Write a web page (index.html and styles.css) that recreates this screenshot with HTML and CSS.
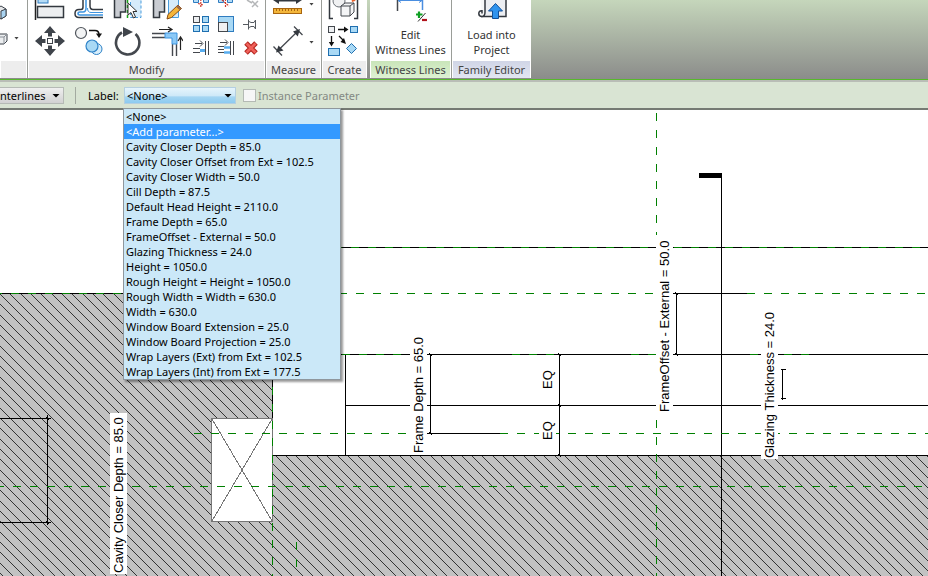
FILE: index.html
```html
<!DOCTYPE html>
<html lang="en">
<head>
    <meta charset="utf-8">
    <title>Family Editor</title>
    <link rel="stylesheet" href="styles.css">
</head>
<body>
    <div class="ribbon">
        <div class="panel panel-geometry">
            <div class="panel-body">
                <div class="tool-grid">
                    <button class="tool" aria-label="Cut"><svg width="8" height="32" viewBox="0 -12 8 32"><path d="M-4 9L1 6L6 9V16L1 19L-4 16Z" fill="#e4e6e8" stroke="#3c424a"/><path d="M1 11L6 9V16L1 19Z" fill="#a9d3f0" stroke="#3c424a"/></svg></button>
                    <span></span>
                    <button class="tool" aria-label="Join"><svg width="8" height="32" viewBox="0 26 8 32"><path d="M-3 36L0 34H7V41L4 44H-3Z" fill="#eceef0" stroke="#3c424a"/><path d="M-3 37H4L7 34M4 37V44" fill="none" stroke="#8a9098"/></svg></button>
                    <button class="caret" aria-label="Join options"></button>
                </div>
            </div>
            <div class="panel-title"></div>
        </div>

        <div class="panel panel-modify">
            <div class="panel-body">
                <div class="big-grid">
                    <button class="tool" aria-label="Align"><svg width="32" height="32" viewBox="34 -12 32 32"><path d="M35.500 -12V20" stroke="#222" stroke-width="1.500"/><rect x="38" y="-8" width="10" height="11" fill="#b5dcf7" stroke="#2f7cc0"/><rect x="37.500" y="6.500" width="26" height="11" fill="#eceef0" stroke="#33383f" stroke-width="1.500"/></svg></button>
                    <button class="tool" aria-label="Offset"><svg width="32" height="32" viewBox="73 -12 32 32"><path d="M103 17.500H79Q75 17.500 75 13.500Q75 9.500 79 9.500H81Q83 9.500 83 7V-8" fill="none" stroke="#33383f" stroke-width="1.500"/><path d="M103 15H80Q78 15 78 13.500Q78 12 80 12H83Q86 12 86 8V-8" fill="none" stroke="#3d94e0" stroke-width="1.500"/><path d="M103 9.500H93Q90 9.500 90 6V-8" fill="none" stroke="#33383f" stroke-width="1.500"/><path d="M103 12.500H91Q87.500 12.500 87.500 8" fill="none" stroke="#3d94e0"/></svg></button>
                    <button class="tool" aria-label="Split"><svg width="32" height="32" viewBox="112 -12 32 32"><path d="M114.500 -8H125.500V12H120.500V17.500H114.500Z" fill="#c9ccd2" stroke="#33383f" stroke-width="1.500"/><path d="M130.500 -8V17.500H141V-8" fill="#d6ecfb" stroke="#4a9cdc" stroke-dasharray="3 2"/><path d="M127.500 -10V20" stroke="#19a319" stroke-width="1.500" stroke-dasharray="3 2"/><path d="M128 3V15L131 12.500L133.500 18L135.500 17L133 11.500H137Z" fill="#fff" stroke="#333"/></svg></button>
                    <button class="tool" aria-label="Split with gap"><svg width="32" height="32" viewBox="151 -12 32 32"><path d="M153.500 -8H164.500V12H159.500V17.500H153.500Z" fill="#c9ccd2" stroke="#33383f" stroke-width="1.500"/><path d="M168.500 -8V17.500H178.500V-8" fill="#d6ecfb" stroke="#4a9cdc"/><path d="M178 5L181.500 8.500L171.500 17.500L167 19L168 14.500Z" fill="#f5b53a" stroke="#8a4d13"/><path d="M178 5L181.500 8.500L179.500 10L176 6.800Z" fill="#9a6a4a"/></svg></button>
                    <button class="tool" aria-label="Move"><svg width="32" height="32" viewBox="34 26 32 32"><g fill="#3f444b"><path d="M50 26L56 33H52V36.500H48V33H44Z"/><path d="M50 56L56 49H52V45.500H48V49H44Z"/><path d="M35 41L42 35V39H45.500V43H42V47Z"/><path d="M65 41L58 35V39H54.500V43H58V47Z"/></g><rect x="47.500" y="38.500" width="5" height="5" fill="#fff" stroke="#3f444b"/></svg></button>
                    <button class="tool" aria-label="Copy"><svg width="32" height="32" viewBox="73 26 32 32"><circle cx="81" cy="33" r="5.500" fill="#f2f3f4" stroke="#50555c" stroke-width="1.200"/><path d="M89 30.500H95Q99 30.500 99 35" fill="none" stroke="#111" stroke-width="1.500"/><path d="M96 33.500H102L99 38Z" fill="#111"/><circle cx="96.500" cy="49" r="5.500" fill="#d8eefb" stroke="#2f83c8"/><circle cx="92" cy="46" r="6" fill="#a9d9f5" stroke="#2f83c8" stroke-width="1.200"/></svg></button>
                    <button class="tool" aria-label="Rotate"><svg width="32" height="32" viewBox="112 26 32 32"><path d="M135.500 34A11.700 11.700 0 1 1 122 32.500" fill="none" stroke="#44484e" stroke-width="2.600"/><path d="M123 27L133 32L123 37Z" fill="#3f444b"/></svg></button>
                    <button class="tool" aria-label="Trim to corner"><svg width="32" height="32" viewBox="151 26 32 32"><path d="M152 33.500H165M152 37.500H165M172.500 44V56M176.500 44V56" stroke="#44484e" stroke-width="1.400"/><path d="M165 33H177V44H172V38H165Z" fill="#8cc9f6" stroke="#3d94e0"/><path d="M159 29.500H171M168 27L172 29.500L168 32M180.500 50V38M178 41L180.500 37L183 41" fill="none" stroke="#222" stroke-width="1.200"/></svg></button>
                </div>
                <div class="small-grid">
                    <button class="tool" aria-label="Split element"><svg width="20" height="20" viewBox="191 -10 20 20"><path d="M193.500 -2V2.500H198.500V-2M203.500 -2V2.500H208.500V-2" fill="#b5dcf7" stroke="#2f7cc0"/><path d="M200.800 -4V7M198 3.500L203.500 5" stroke="#cf3b2c" stroke-width="1.200" stroke-dasharray="2 1"/></svg></button>
                    <button class="tool" aria-label="Mirror"><svg width="20" height="20" viewBox="216 -10 20 20"><path d="M218.500 -2V2.500H223.500V-2M227.500 -2V2.500H232.500V-2" fill="#b5dcf7" stroke="#2f7cc0"/><path d="M225.500 -4V7M222 0L229 6" stroke="#cf3b2c" stroke-width="1.200" stroke-dasharray="2 1"/></svg></button>
                    <button class="tool" aria-label="Unpin"><svg width="20" height="20" viewBox="241 -10 20 20"><path d="M247 0L252 3M252 1L258 7M258 1L252 7" fill="none" stroke="#b4b6b8" stroke-width="1.500"/></svg></button>
                    <button class="tool" aria-label="Array"><svg width="20" height="20" viewBox="191 14 20 20"><rect x="193.500" y="16.500" width="6" height="6" fill="#eceef0" stroke="#44484e"/><g fill="#a9d9f5" stroke="#1f6fb0"><rect x="202.500" y="16.500" width="6" height="6"/><rect x="193.500" y="25.500" width="6" height="6"/><rect x="202.500" y="25.500" width="6" height="6"/></g></svg></button>
                    <button class="tool" aria-label="Scale"><svg width="20" height="20" viewBox="216 14 20 20"><rect x="218.500" y="16.500" width="15" height="15" fill="#a9d9f5" stroke="#2f7cc0"/><rect x="218.500" y="22.500" width="9" height="9" fill="#f0f1f2" stroke="#44484e"/></svg></button>
                    <button class="tool" aria-label="Pin"><svg width="20" height="20" viewBox="241 14 20 20"><path d="M243 24.500H248M248.500 19.500V29.500M249 21.500L251 22.500H254L255.500 20V29L254 26.500H251L249 27.500" fill="none" stroke="#555a60"/></svg></button>
                    <button class="tool" aria-label="Extend single"><svg width="20" height="20" viewBox="191 38 20 20"><path d="M195 43.500H202M200 40.500L203 43.500L200 46.500M193 48.500H200M193 52.500H200M205.500 41V55M208.500 41V55" fill="none" stroke="#44484e"/><path d="M200 50.500H205" stroke="#59aef0" stroke-width="3"/></svg></button>
                    <button class="tool" aria-label="Extend multiple"><svg width="20" height="20" viewBox="216 38 20 20"><path d="M220 42.500H227M225 39.500L228 42.500L225 45.500M218 46.500H224M218 49.500H224M218 52.500H224M230.500 41V55M233.500 41V55" fill="none" stroke="#44484e"/><path d="M224 47.500H230M224 52.500H230" stroke="#59aef0" stroke-width="2.500"/></svg></button>
                    <button class="tool" aria-label="Delete"><svg width="20" height="20" viewBox="241 38 20 20"><path d="M246 43L256 53M256 43L246 53" stroke="#b3261e" stroke-width="5"/><path d="M246.500 43.500L255.500 52.500M255.500 43.500L246.500 52.500" stroke="#f0605a" stroke-width="2.800"/></svg></button>
                </div>
            </div>
            <div class="panel-title">Modify</div>
        </div>

        <div class="panel panel-measure">
            <div class="panel-body">
                <div class="tool-grid">
                    <button class="tool" aria-label="Measure"><svg width="32" height="32" viewBox="271 -12 32 32"><path d="M273 0L279 -4V-1H296V-4L302 0L296 4V1.500H279V4Z" fill="#33383f"/><rect x="273.500" y="8.500" width="28" height="5" fill="#f3b63b" stroke="#a8650f"/><path d="M276.500 9V11M279.500 9V11M282.500 9V11M285.500 9V11M288.500 9V11M291.500 9V11M294.500 9V11M297.500 9V11" stroke="#a8650f"/></svg></button>
                    <button class="caret" aria-label="Measure options"></button>
                    <button class="tool" aria-label="Aligned dimension"><svg width="32" height="32" viewBox="271 26 32 32"><path d="M277.500 51L298.500 30.500M273.500 46.500L282 55.500M294 26.500L302.500 35" stroke="#44484e" stroke-width="1.300"/><path d="M276 52.500L278.500 45.500L283.500 50.500ZM300 29L293 31.500L297.800 36.500Z" fill="#33383f"/></svg></button>
                    <button class="caret" aria-label="Dimension options"></button>
                </div>
            </div>
            <div class="panel-title">Measure</div>
        </div>

        <div class="panel panel-create">
            <div class="panel-body">
                <div class="create-grid">
                    <button class="tool" aria-label="Create group"><svg width="32" height="32" viewBox="328 -12 32 32"><path d="M333 -8H329.500V18.500H333M354 -8H357.500V18.500H354" fill="none" stroke="#33383f" stroke-width="1.500"/><circle cx="339" cy="1" r="6" fill="#f0f1f2" stroke="#6a6f76"/><path d="M341 6L345 3H354V12L350 16H341Z" fill="#f4f5f6" stroke="#44484e"/><path d="M341 6H350L354 3M350 6V16" fill="none" stroke="#44484e"/><path d="M351 -4L353 -1L357 -2L355 1L352 2Z" fill="#e5602a"/></svg></button>
                    <button class="tool" aria-label="Create similar"><svg width="32" height="32" viewBox="328 26 32 32"><rect x="328.500" y="26.500" width="6" height="6" fill="#eceef0" stroke="#44484e"/><rect x="350.500" y="26.500" width="7" height="6" fill="#a9d9f5" stroke="#1f6fb0"/><rect x="328.500" y="48.500" width="11" height="7" fill="#a9d9f5" stroke="#1f6fb0"/><path d="M351.500 43.500L356.500 48.500L351.500 53.500L346.500 48.500Z" fill="#a9d9f5" stroke="#1f6fb0"/><path d="M338 29.500H345M331.500 36V43M339 36L344 41" stroke="#111" stroke-width="1.300"/><path d="M344 26.500L348.500 29.500L344 32.500ZM328.800 42H334.200L331.500 46.500ZM346 44L340.500 42L344 38Z" fill="#111"/></svg></button>
                </div>
            </div>
            <div class="panel-title">Create</div>
        </div>

        <div class="panel panel-witness">
            <div class="panel-body">
                <button class="big-button">
                    <svg width="32" height="32" viewBox="394 -8 32 32"><path d="M396.500 -8V11M421.500 -8V0" stroke="#44484e" stroke-width="1.500"/><path d="M397 .5H421" stroke="#4a8ee0"/><path d="M421.500 0V10" stroke="#4a8ee0" stroke-width="1.500"/><path d="M400 -1.500L397 .5L400 2.500M418 -1.500L421 .5L418 2.500" fill="none" stroke="#4a8ee0"/><path d="M418 11.500V18M415 14.500H421.500" stroke="#0e9f22" stroke-width="2.200"/><path d="M417 21.500L424.500 13" stroke="#333"/><path d="M421 20H426" stroke="#b1121b" stroke-width="2.200"/></svg>
                    <span>Edit</span>
                    <span>Witness Lines</span>
                </button>
            </div>
            <div class="panel-title">Witness Lines</div>
        </div>

        <div class="panel panel-family">
            <div class="panel-body">
                <button class="big-button">
                    <svg width="32" height="32" viewBox="476 -8 32 32"><path d="M483.500 -8H506V16.500H481" fill="#eceef2" stroke="#33383f" stroke-width="1.500"/><path d="M479.500 -8H485V12Q485 16.500 482 16.500Q478.800 16.500 478.800 13.500Q478.800 10.500 482 10.800V13.500" fill="#f6f7f8" stroke="#33383f" stroke-width="1.500"/><path d="M495.500 3.500L502.500 11H498.500V18.500H492.500V11H488.500Z" fill="#2f93ee" stroke="#114f98"/></svg>
                    <span>Load into</span>
                    <span>Project</span>
                </button>
            </div>
            <div class="panel-title">Family Editor</div>
        </div>
    </div>

    <div class="options-bar">
        <div class="combo combo-prefer">
            <select aria-label="Placement reference">
                <option>nterlines</option>
            </select>
        </div>
        <div class="divider"></div>
        <label class="field-label" for="label-select">Label:</label>
        <div class="combo combo-label">
            <select id="label-select">
                <option>&lt;None&gt;</option>
            </select>
            <ul class="menu">
                <li>&lt;None&gt;</li>
                <li class="active">&lt;Add parameter...&gt;</li>
                <li>Cavity Closer Depth = 85.0</li>
                <li>Cavity Closer Offset from Ext = 102.5</li>
                <li>Cavity Closer Width = 50.0</li>
                <li>Cill Depth = 87.5</li>
                <li>Default Head Height = 2110.0</li>
                <li>Frame Depth = 65.0</li>
                <li>FrameOffset - External = 50.0</li>
                <li>Glazing Thickness = 24.0</li>
                <li>Height = 1050.0</li>
                <li>Rough Height = Height = 1050.0</li>
                <li>Rough Width = Width = 630.0</li>
                <li>Width = 630.0</li>
                <li>Window Board Extension = 25.0</li>
                <li>Window Board Projection = 25.0</li>
                <li>Wrap Layers (Ext) from Ext = 102.5</li>
                <li>Wrap Layers (Int) from Ext = 177.5</li>
            </ul>
        </div>
        <label class="check">
            <input type="checkbox" disabled>
            Instance Parameter
        </label>
    </div>

    <svg class="drawing" viewBox="0 110 928 466">
        <defs>
            <pattern id="hatch" x="0" y="294" width="31" height="31" patternUnits="userSpaceOnUse">
                <path class="hatch-line" d="M0 0L31 31M10 0L31 21M0 21L10 31M21 0L31 10M0 10L21 31"/>
            </pattern>
        </defs>

        <!-- walls -->
        <path class="wall" d="M0 294H272V456H928V576H0Z"/>
        <path fill="url(#hatch)" d="M0 294H272V456H928V576H0Z"/>

        <!-- cavity closer -->
        <rect class="closer" x="211.500" y="418.500" width="61" height="103"/>
        <path class="closer-cross" d="M212 419L272 521M272 419L212 521"/>

        <!-- model lines -->
        <g class="line">
            <path d="M0 293.500H272M341 247.500H928M341 354.500H928M345 405.500H928M273 455.500H928"/>
            <path d="M272.500 294V418M345.500 354V456M721.500 173V576"/>
            <path d="M0 418.500H51M0 522.500H51M47.500 415V525"/>
            <path d="M430.500 354V434M427 433.500H502M559.500 354V456"/>
            <path d="M673 293.500H747M676.500 293V355M782.500 369V400M781 369.500H786M781 398.500H786"/>
        </g>
        <path class="tick" d="M46 417L49 420M46 521L49 524M429 353L432 356M429 432L432 435M558 353L561 356M558 404L561 407M558 454L561 457M675 292L678 295M675 353L678 356"/>
        <rect x="699" y="173" width="23" height="5"/>

        <!-- reference planes -->
        <g class="plane">
            <path d="M-4 486.500H928M-6 293.500H124M339 293.500H660M747 293.500H928"/>
            <path d="M194 433.500H427M500 433.500H928"/>
            <path d="M334 247.500H928M342 354.500H402M512 354.500H555M631 354.500H656M750 354.500H758M784 354.500H812"/>
            <path d="M272.500 370V576M296.500 542V576M656.500 113V235M656.500 420V576"/>
        </g>

        <!-- dimension labels -->
        <g class="label-bg">
            <rect x="110" y="413" width="17" height="161"/>
            <rect x="410" y="335" width="17" height="118"/>
            <rect x="539" y="369" width="17" height="20"/>
            <rect x="539" y="420" width="17" height="20"/>
            <rect x="656" y="235" width="17" height="178"/>
            <rect x="761" y="308" width="17" height="151"/>
        </g>
        <g class="dim">
            <text transform="translate(123 573) rotate(-90)">Cavity Closer Depth = 85.0</text>
            <text transform="translate(423 453) rotate(-90)">Frame Depth = 65.0</text>
            <text transform="translate(552 389) rotate(-90)">EQ</text>
            <text transform="translate(552 440) rotate(-90)">EQ</text>
            <text transform="translate(669 412) rotate(-90)">FrameOffset - External = 50.0</text>
            <text transform="translate(774 458) rotate(-90)">Glazing Thickness = 24.0</text>
        </g>
    </svg>
</body>
</html>
```

FILE: styles.css
```css
* {
    box-sizing: border-box;
}

body {
    margin: 0;
    font-family: "Noto Sans", "Open Sans", sans-serif;
    font-size: 11px;
    line-height: 15px;
    color: #000;
    background: #fff;
    overflow: hidden;
}

button {
    padding: 0;
    border: none;
    background: none;
    font: inherit;
    color: inherit;
}

svg {
    display: block;
}

/* Ribbon */
.ribbon {
    display: flex;
    height: 80px;
    padding-bottom: 1px;
    background: linear-gradient(#c5d6bb, #8b8c8a);
    border-bottom: 1px solid #58b82c;
    overflow: hidden;
}

.panel {
    display: flex;
    flex-direction: column;
    flex: none;
    border-right: 1px solid #9a9d98;
    background: #fff;
}

.panel-body {
    display: flex;
    align-items: flex-end;
    height: 61px;
    padding-bottom: 3px;
    overflow: hidden;
}

.panel-title {
    flex: 1;
    margin: 0 1px;
    background: #ededed;
    color: #444;
    line-height: 17px;
    text-align: center;
}

.panel-geometry { width: 28px; }
.panel-modify { width: 238px; }
.panel-measure { width: 56px; }
.panel-create { width: 45px; margin-right: 3px; border-right: none; }
.panel-witness { width: 82px; }
.panel-family { width: 79px; border-right: none; }

.panel-modify .panel-body {
    gap: 8px;
    padding-left: 6px;
}

.panel-measure .panel-body {
    padding-left: 5px;
}

.panel-create .panel-body {
    padding-left: 6px;
}

.panel-witness .panel-title {
    background: linear-gradient(#c9e5b9, #def2d3);
}

.panel-family .panel-title {
    background: linear-gradient(#d0d5e6, #e2e6f2);
}

.big-grid {
    display: grid;
    grid-template-columns: repeat(4, 32px);
    gap: 6px 7px;
}

.small-grid {
    display: grid;
    grid-template-columns: repeat(3, 20px);
    gap: 4px 5px;
}

.tool-grid {
    display: grid;
    grid-template-columns: auto auto;
    gap: 6px;
    align-items: center;
}

.create-grid {
    display: grid;
    gap: 6px;
}

.caret {
    width: 5px;
    height: 3px;
    background: #444;
    clip-path: polygon(0 0, 100% 0, 50% 100%);
}

.panel-geometry .caret {
    margin-bottom: 8px;
}

.big-button {
    display: flex;
    flex-direction: column;
    align-items: center;
    width: 100%;
    padding-bottom: 1px;
    color: #333;
}

.big-button svg {
    margin-bottom: 3px;
}

/* Options bar */
.options-bar {
    display: flex;
    align-items: center;
    height: 30px;
    background: #d9e4d3;
    border-top: 2px solid #b9bdb6;
    border-bottom: 2px solid #757a73;
}

.combo {
    position: relative;
}

.combo select {
    display: block;
    width: 100%;
    height: 17px;
    padding: 0 2px;
    border: 1px solid #b5bab5;
    border-radius: 0;
    background: linear-gradient(#efefef, #d2d2d2);
    color: #000;
    font: inherit;
    appearance: none;
}

.combo::after {
    content: "";
    position: absolute;
    top: 7px;
    right: 4px;
    width: 8px;
    height: 4px;
    background: #000;
    clip-path: polygon(0 0, 100% 0, 50% 100%);
}

.combo-prefer {
    width: 64px;
}

.combo-prefer select {
    padding-left: 0;
    border-left: none;
}

.divider {
    width: 1px;
    height: 17px;
    margin: 0 12px 0 11px;
    background: #a3aaa0;
}

.field-label {
    width: 36px;
}

.combo-label {
    width: 112px;
}

.combo-label select {
    border-color: #b4cfe0;
    background: linear-gradient(#e6f4fc 0%, #cfe9f8 50%, #a4d5f2 60%, #8ccaf0 100%);
}

.menu {
    position: absolute;
    top: 21px;
    left: -1px;
    z-index: 1;
    width: 218px;
    margin: 0;
    padding: 0;
    border: 1px solid #8f979d;
    background: #cbe8f8;
    box-shadow: 2px 2px 2px rgba(0, 0, 0, 0.4);
    list-style: none;
}

.menu li {
    padding-left: 2px;
    white-space: nowrap;
}

.menu .active {
    background: #3399ff;
    color: #fff;
}

.check {
    display: flex;
    align-items: center;
    gap: 2px;
    margin-left: 7px;
    color: #838983;
}

.check input {
    width: 13px;
    height: 13px;
    margin: 0;
    border: 1px solid #b4bab4;
    background: #f6f6f6;
    appearance: none;
}

/* Drawing area */
.drawing {
    width: 100%;
    height: auto;
    shape-rendering: crispEdges;
}

.wall {
    fill: #c2c2c2;
}

.hatch-line {
    fill: none;
    stroke: #333;
}

.closer {
    fill: #fff;
    stroke: #777;
}

.closer-cross {
    stroke: #777;
}

.line path {
    fill: none;
    stroke: #000;
}

.tick {
    stroke: #000;
}

.plane path {
    fill: none;
    stroke: #008000;
    stroke-dasharray: 8 9;
}

.label-bg {
    fill: #fff;
}

.dim {
    font-family: "Liberation Sans", Arial, sans-serif;
    font-size: 13px;
}
```
